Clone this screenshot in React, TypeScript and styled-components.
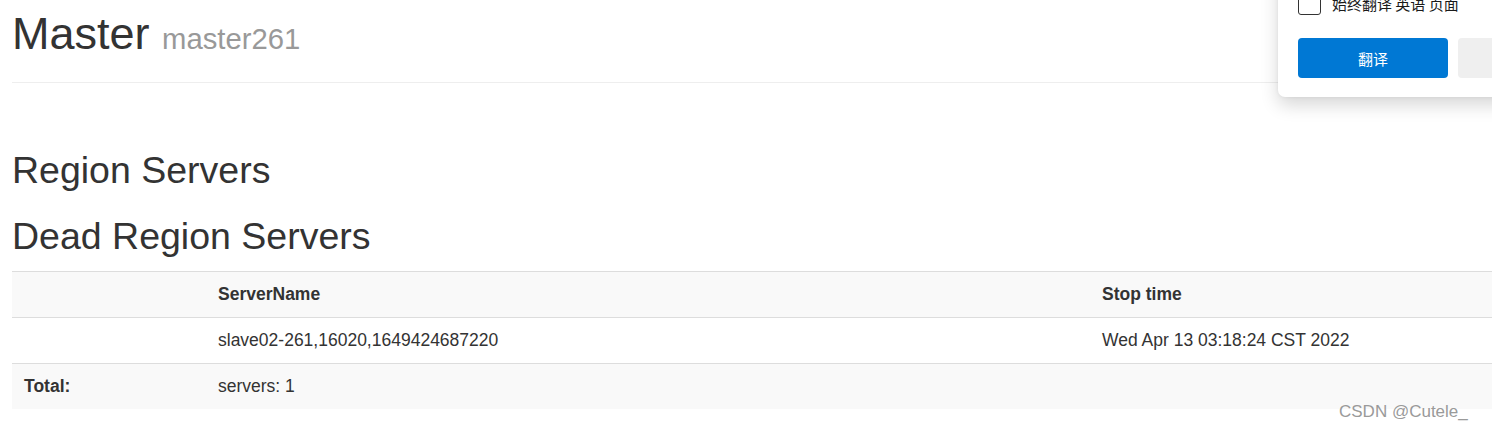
import styled, { createGlobalStyle } from "styled-components";

const GlobalStyle = createGlobalStyle`
  html, body {
    margin: 0;
    padding: 0;
    background: #fff;
  }
  body {
    font-family: "Liberation Sans", Arial, Helvetica, sans-serif;
    color: #333;
    overflow: hidden;
  }
`;

const Page = styled.div`
  position: relative;
  width: 1492px;
  height: 432px;
  overflow: hidden;
  box-sizing: border-box;
  padding: 9px 0 0 12px;
`;

const PageHeader = styled.div`
  padding-bottom: 11px;
  border-bottom: 1px solid #eee;
`;

const Title = styled.h1`
  margin: 0 0 12.5px;
  font-size: 45px;
  line-height: 1.1;
  font-weight: 400;
  color: #333;
`;

const Subtitle = styled.small`
  font-size: 65%;
  color: #999;
  font-weight: 400;
`;

const SectionTitle = styled.h2<{ $top: number }>`
  margin: ${(p) => p.$top}px 0 0;
  font-size: 37.5px;
  line-height: 1.1;
  font-weight: 400;
  color: #333;
`;

const Table = styled.table`
  width: 100%;
  margin-top: 13px;
  border-collapse: collapse;
  border-spacing: 0;
  font-size: 17.5px;
  line-height: 25px;
`;

const Row = styled.tr<{ $striped?: boolean }>`
  background: ${(p) => (p.$striped ? "#f9f9f9" : "#fff")};
`;

const HeadCell = styled.th`
  padding: 10px 12px;
  text-align: left;
  font-weight: 700;
  border-top: 1px solid #ddd;
  vertical-align: bottom;
`;

const Cell = styled.td<{ $bold?: boolean }>`
  padding: 10px 12px;
  border-top: 1px solid #ddd;
  font-weight: ${(p) => (p.$bold ? 700 : 400)};
`;

const Popup = styled.div`
  position: absolute;
  top: -40px;
  left: 1278px;
  width: 320px;
  height: 137px;
  box-sizing: border-box;
  padding: 31px 0 0 20px;
  background: #fff;
  border-radius: 7px;
  box-shadow: 0 8px 18px rgba(0, 0, 0, 0.16), 0 0 4px rgba(0, 0, 0, 0.06);
  font-family: "Noto Sans CJK SC", sans-serif;
`;

const CheckRow = styled.div`
  display: flex;
  align-items: center;
  gap: 11px;
  height: 24px;
`;

const CheckBox = styled.span`
  width: 21px;
  height: 21px;
  border: 1.5px solid #333;
  border-radius: 3px;
`;

const CheckLabel = styled.span`
  font-size: 15px;
  color: #1a1a1a;
  line-height: 1;
`;

const Buttons = styled.div`
  display: flex;
  gap: 10px;
  margin-top: 23px;
`;

const Button = styled.div<{ $primary?: boolean }>`
  flex: 0 0 ${(p) => (p.$primary ? 150 : 120)}px;
  height: 40px;
  border-radius: 4px;
  display: flex;
  align-items: center;
  justify-content: center;
  font-size: 15px;
  color: ${(p) => (p.$primary ? "#fff" : "#1a1a1a")};
  background: ${(p) => (p.$primary ? "#0078d4" : "#efefef")};
`;

const Watermark = styled.div`
  position: absolute;
  left: 1339px;
  top: 402px;
  font-size: 17px;
  color: #9a9a9a;
  font-family: "Liberation Sans", Arial, sans-serif;
`;

export default function App() {
  return (
    <>
      <GlobalStyle />
      <Page>
        <PageHeader>
          <Title>
            Master <Subtitle>master261</Subtitle>
          </Title>
        </PageHeader>

        <SectionTitle $top={67}>Region Servers</SectionTitle>
        <SectionTitle $top={25}>Dead Region Servers</SectionTitle>

        <Table>
          <colgroup>
            <col style={{ width: 194 }} />
            <col style={{ width: 884 }} />
            <col />
          </colgroup>
          <thead>
            <Row $striped>
              <HeadCell></HeadCell>
              <HeadCell>ServerName</HeadCell>
              <HeadCell>Stop time</HeadCell>
            </Row>
          </thead>
          <tbody>
            <Row>
              <Cell></Cell>
              <Cell>slave02-261,16020,1649424687220</Cell>
              <Cell>Wed Apr 13 03:18:24 CST 2022</Cell>
            </Row>
            <Row $striped>
              <Cell $bold>Total:</Cell>
              <Cell>servers: 1</Cell>
              <Cell></Cell>
            </Row>
          </tbody>
        </Table>

        <Popup>
          <CheckRow>
            <CheckBox />
            <CheckLabel>始终翻译 英语 页面</CheckLabel>
          </CheckRow>
          <Buttons>
            <Button $primary>翻译</Button>
            <Button />
          </Buttons>
        </Popup>

        <Watermark>CSDN @Cutele_</Watermark>
      </Page>
    </>
  );
}
